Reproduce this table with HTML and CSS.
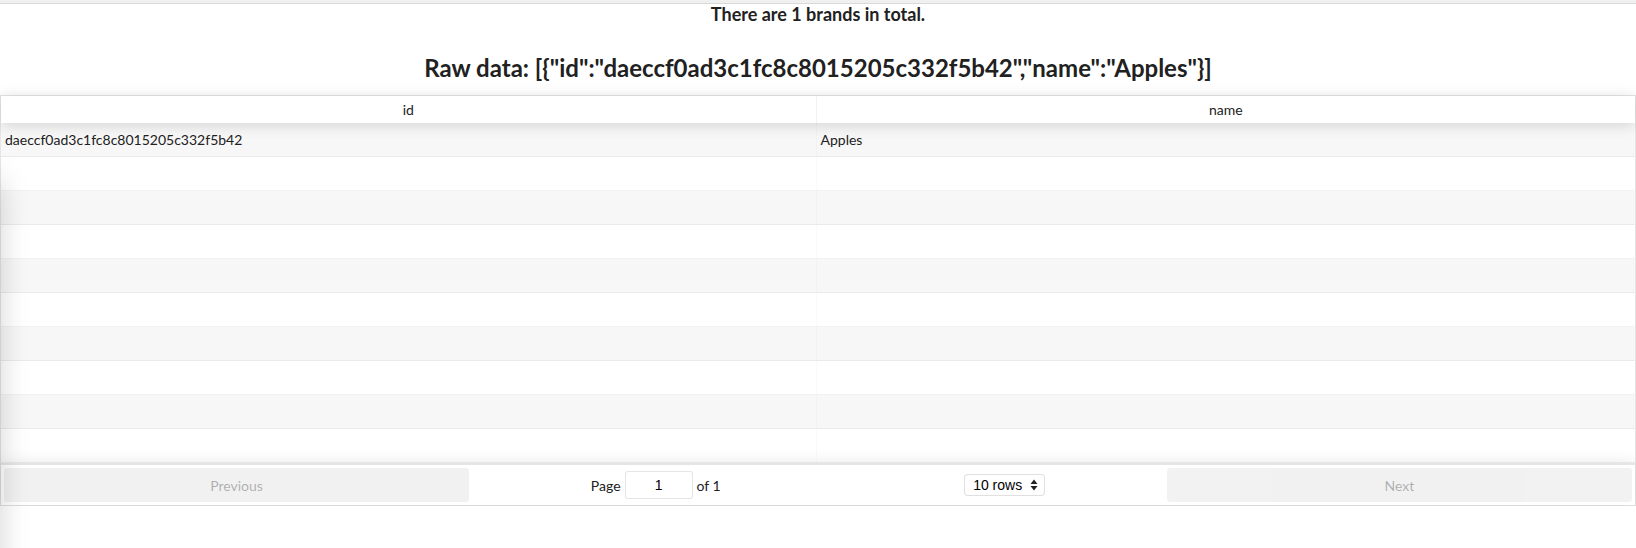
FILE: index.html
```html
<!DOCTYPE html>
<html>
<head>
<meta charset="utf-8">
<link rel="stylesheet" href="styles.css">
</head>
<body>
<div class="topbar"></div>
<h4 class="count">There are 1 brands in total.</h4>
<h2 class="raw">Raw data: [{"id":"daeccf0ad3c1fc8c8015205c332f5b42","name":"Apples"}]</h2>
<div class="rtable">
  <div class="thead">
    <div class="th">id</div>
    <div class="th">name</div>
  </div>
  <div class="tbody">
    <div class="tr odd"><div class="td">daeccf0ad3c1fc8c8015205c332f5b42</div><div class="td">Apples</div></div>
    <div class="tr"><div class="td">&nbsp;</div><div class="td">&nbsp;</div></div>
    <div class="tr odd"><div class="td">&nbsp;</div><div class="td">&nbsp;</div></div>
    <div class="tr"><div class="td">&nbsp;</div><div class="td">&nbsp;</div></div>
    <div class="tr odd"><div class="td">&nbsp;</div><div class="td">&nbsp;</div></div>
    <div class="tr"><div class="td">&nbsp;</div><div class="td">&nbsp;</div></div>
    <div class="tr odd"><div class="td">&nbsp;</div><div class="td">&nbsp;</div></div>
    <div class="tr"><div class="td">&nbsp;</div><div class="td">&nbsp;</div></div>
    <div class="tr odd"><div class="td">&nbsp;</div><div class="td">&nbsp;</div></div>
    <div class="tr"><div class="td">&nbsp;</div><div class="td">&nbsp;</div></div>
  </div>
  <div class="pagination">
    <div class="side"><button class="btn" disabled>Previous</button></div>
    <div class="center">
      <span class="pageinfo">Page <input class="pagejump" type="text" value="1"> of 1</span>
      <span class="sizeopts"><span class="select"><span>10 rows</span><svg width="8" height="12" viewBox="0 0 8 12"><path d="M4 0.5 L7.5 5 L0.5 5 Z M4 11.5 L7.5 7 L0.5 7 Z" fill="#222"/></svg></span></span>
    </div>
    <div class="side"><button class="btn" disabled>Next</button></div>
  </div>
</div>
<div class="edgeshadow"></div>
</body>
</html>
```

FILE: styles.css
```css
html, body {
  margin: 0;
  padding: 0;
  background: #fff;
  overflow: hidden;
}
body {
  font-family: Lato, "Open Sans", sans-serif;
  color: #212121;
  font-size: 14px;
}
.topbar {
  height: 3px;
  background: #f0f0f0;
  border-bottom: 1px solid #d9d9d9;
}
.count {
  margin: 0;
  font-size: 18px;
  font-weight: 700;
  text-align: center;
  line-height: 1.2;
}
.raw {
  margin: 28px 0 0 0;
  font-size: 24px;
  font-weight: 700;
  text-align: center;
  line-height: 1.2;
}
.rtable {
  margin-top: 13px;
  border: 1px solid rgba(0,0,0,0.1);
  display: flex;
  flex-direction: column;
  position: relative;
}
.thead {
  display: flex;
  box-shadow: 0 2px 15px 0 rgba(0,0,0,0.15);
  position: relative;
  z-index: 1;
  background: #fff;
}
.th {
  flex: 1 1 0;
  padding: 5px;
  text-align: center;
  line-height: 17px;
  border-right: 1px solid rgba(0,0,0,0.05);
}
.th:first-child, .td:first-child { flex: 815 1 0; }
.th:last-child, .td:last-child { flex: 819 1 0; border-right: 0; }
.tbody {
  display: flex;
  flex-direction: column;
}
.tr {
  display: flex;
  height: 34px;
  box-sizing: border-box;
  border-bottom: 1px solid rgba(0,0,0,0.05);
}
.tr.odd { background: rgba(0,0,0,0.03); }
.td {
  flex: 1 1 0;
  padding: 0 5px 0 4px;
  display: flex;
  align-items: center;
  line-height: 17px;
  border-right: 1px solid rgba(0,0,0,0.02);
}
.pagination {
  display: flex;
  justify-content: space-between;
  align-items: stretch;
  padding: 3px;
  border-top: 2px solid rgba(0,0,0,0.1);
  box-shadow: 0 0 15px 0 rgba(0,0,0,0.1);
  position: relative;
  z-index: 1;
  background: #fff;
}
.side {
  flex: 1 1 0;
  display: flex;
}
.btn {
  flex: 1;
  border: 0;
  border-radius: 3px;
  padding: 6px;
  font-family: Lato, sans-serif;
  font-size: 14px;
  color: rgba(0,0,0,0.6);
  background: rgba(0,0,0,0.1);
  opacity: 0.5;
}
.center {
  flex: 1.5 1 0;
  display: flex;
  align-items: center;
  justify-content: space-around;
}
.pageinfo {
  margin: 3px 10px;
  white-space: nowrap;
  display: inline-flex;
  align-items: center;
  gap: 4px;
}
.pagejump {
  width: 68px;
  height: 28px;
  box-sizing: border-box;
  border: 1px solid rgba(0,0,0,0.1);
  border-radius: 3px;
  padding: 5px 7px;
  text-align: center;
  font-family: "Liberation Sans", Arial, sans-serif;
  font-size: 14px;
  color: #000;
  background: #fff;
  outline: none;
}
.sizeopts {
  margin: 3px 10px;
}
.select {
  display: inline-flex;
  align-items: center;
  justify-content: space-between;
  width: 81px;
  height: 22px;
  box-sizing: border-box;
  padding: 0 6px 0 8px;
  border: 1px solid rgba(0,0,0,0.12);
  border-radius: 4px;
  font-family: "Liberation Sans", Arial, sans-serif;
  font-size: 14px;
  color: #000;
  background: #fff;
}
.edgeshadow {
  position: fixed;
  left: -60px;
  top: 180px;
  width: 60px;
  height: 600px;
  box-shadow: 0 0 30px rgba(0,0,0,0.18);
  pointer-events: none;
  z-index: 5;
}
```
